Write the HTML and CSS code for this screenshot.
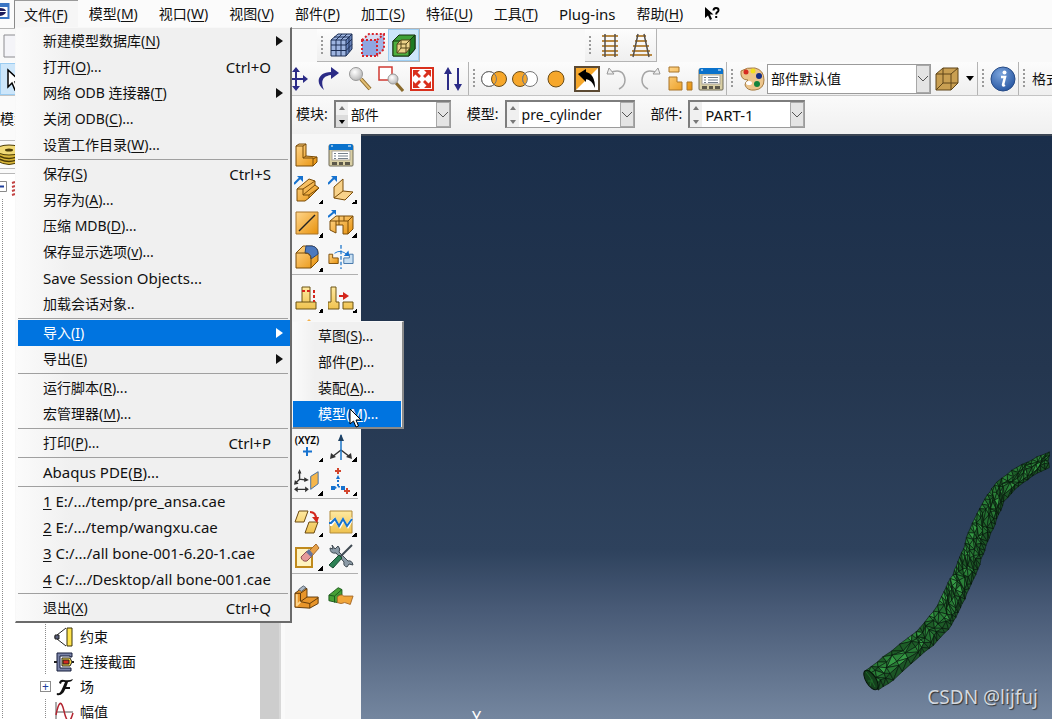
FILE: index.html
```html
<!DOCTYPE html>
<html lang="zh-CN">
<head>
    <meta charset="UTF-8">
    <meta name="viewport" content="width=device-width, initial-scale=1.0">
    <title>Abaqus/CAE</title>
    <link rel="stylesheet" href="styles.css">
</head>
<body>
    <!-- Shared icons -->
    <svg class="defs" width="0" height="0" aria-hidden="true">
        <defs>
            <linearGradient id="gold" x1="0" y1="0" x2="1" y2="1">
                <stop offset="0" stop-color="#ffd68c"/>
                <stop offset="1" stop-color="#e8920c"/>
            </linearGradient>
            <linearGradient id="pale" x1="0" y1="0" x2="0" y2="1">
                <stop offset="0" stop-color="#ffe9a0"/>
                <stop offset="1" stop-color="#efc24e"/>
            </linearGradient>
            <radialGradient id="lens" cx="0.4" cy="0.35" r="0.7">
                <stop offset="0" stop-color="#fff"/>
                <stop offset="1" stop-color="#b4b4b4"/>
            </radialGradient>
            <radialGradient id="info" cx="0.4" cy="0.3" r="0.8">
                <stop offset="0" stop-color="#7ba4dc"/>
                <stop offset="1" stop-color="#1f4f9c"/>
            </radialGradient>
            <symbol id="manager" viewBox="0 0 26 26">
                <rect x="1" y="3" width="24" height="21" rx="1" fill="#d9cfa4" stroke="#6e6a58"/>
                <path d="M1 8V4q0-2 2-2h20q2 0 2 2v4z" fill="#0a72cc"/>
                <path d="M3 4h2M20 4h3" stroke="#fff"/>
                <rect x="4" y="9" width="18" height="9" fill="#fff" stroke="#aaa498"/>
                <path d="M6 11.500h2M6 14h2M6 16.500h2M10 11.500h10M10 14h10M10 16.500h10" stroke="#75808c"/>
                <path d="M4 20h5v3H4zM11 20h4v3h-4zM17 20h5v3h-5z" fill="#5c584a"/>
            </symbol>
        </defs>
    </svg>

    <div class="app">
        <nav class="menubar">
            <svg class="app-icon" width="13" height="28" viewBox="0 0 13 28"><rect x="-6" y="4" width="14.500" height="14" fill="#fff" stroke="#3a75c4" stroke-width="2"/><path d="M0 4h9v3H0z" fill="#3a75c4"/><path d="M0 8q5 0 6 3H0zM0 12h6q-1 3-6 4z" fill="#1d1d5c"/></svg>
            <button class="menu-btn open">文件(<u>F</u>)</button>
            <button class="menu-btn">模型(<u>M</u>)</button>
            <button class="menu-btn">视口(<u>W</u>)</button>
            <button class="menu-btn">视图(<u>V</u>)</button>
            <button class="menu-btn">部件(<u>P</u>)</button>
            <button class="menu-btn">加工(<u>S</u>)</button>
            <button class="menu-btn">特征(<u>U</u>)</button>
            <button class="menu-btn">工具(<u>T</u>)</button>
            <button class="menu-btn latin">Plug-ins</button>
            <button class="menu-btn">帮助(<u>H</u>)</button>
            <button class="menu-btn" aria-label="Context help">
                <svg width="16" height="16" viewBox="0 0 16 16"><path d="M1 1v11l3-2.500 2 4.500 2-1-2-4.500h3.500z"/><path d="M9.500 4.500q0-2.500 2.500-2.500t2.500 2.200q0 1.400-1.500 2.200-.8.600-.8 2M12.200 10v2" fill="none" stroke="#000" stroke-width="2"/></svg>
            </button>
        </nav>

        <div class="toolbar">
            <div class="tools lead">
                <button class="tool" aria-label="New"><svg viewBox="0 0 26 26"><path d="M1 2h14l7 6v16H1z" fill="#f4f4f8" stroke="#8c8c90"/></svg></button>
            </div>
            <div class="tools boxed">
                <span class="grip"></span>
                <button class="tool" aria-label="Mesh"><svg viewBox="0 0 26 26"><path d="M2 8l7-6h14v15l-6 7H2z" fill="#9db4e0"/><path d="M17 8l6-6v15l-6 7z" fill="#6480b8"/><path d="M2 8h15v16H2zM2 8l7-6h14v15l-6 7M17 8l6-6M7 8v16M12 8v16M2 13h15l6-6M2 18.500h15l6-6M7 8l6-6M12 8l6-6M5 5h15v15" fill="none" stroke="#1d2f55"/></svg></button>
                <button class="tool" aria-label="Seeds"><svg viewBox="0 0 26 26"><path d="M2 8l7-6h15v15l-7 7H2z" fill="#d5dbf2"/><path d="M2 8h15v16H2z" fill="#8fa6e0"/><path d="M17 8l7-6v15l-7 7z" fill="#a4b4e4"/><path d="M2 8h15v16H2zM2 8l7-6h15v15l-7 7M17 8l7-6" fill="none" stroke="#d8232b" stroke-width="2" stroke-dasharray="2 2"/></svg></button>
                <button class="tool pressed" aria-label="Geometry"><svg viewBox="0 0 26 26"><path d="M2 9l6-6h16v14l-6 7H2z" fill="#3da037" stroke="#14330f"/><path d="M18 9l6-6v14l-6 7z" fill="#1e7a22" stroke="#14330f"/><path d="M2 9h16v15H2z" fill="#4caf3e" stroke="#14330f"/><path d="M6 12l4-4h9v8l-4 5H6z" fill="#ecd28a" stroke="#54461b"/><path d="M6 12h9v9M15 12l4-4M10 8v8h9M10 16l-4 5" fill="none" stroke="#54461b"/></svg></button>
            </div>
            <div class="tools boxed far">
                <span class="grip"></span>
                <button class="tool" aria-label="Parallel"><svg viewBox="0 0 26 26"><path d="M5 4h16M5 9h16M5 14h16M5 19h16M5 23h16" stroke="#b98a45" stroke-width="2"/><path d="M8 2v23M18 2v23" stroke="#55504a" stroke-width="1.500"/></svg></button>
                <button class="tool" aria-label="Perspective"><svg viewBox="0 0 26 26"><path d="M8 4h10M7 9h12M5 14h16M4 19h18M2 23h22" stroke="#b98a45" stroke-width="2"/><path d="M10 2L5 25M16 2l5 23" stroke="#55504a" stroke-width="1.500"/></svg></button>
            </div>
        </div>

        <div class="toolbar second">
            <div class="tools lead">
                <button class="tool pressed" aria-label="Select"><svg viewBox="0 0 26 26"><path d="M5 4v17l4-4 3 7 3-1-3-7h6z" fill="#fff" stroke="#000" stroke-width="1.500"/></svg></button>
            </div>
            <div class="tools ruled">
                <button class="tool" aria-label="Pan"><svg viewBox="0 0 26 26"><path d="M11 3v20M1 13h20" stroke="#2b2b86" stroke-width="2"/><path d="M11 1l4 5H7zM11 25l4-5H7zM-1 13l5-4v8zM23 13l-5-4v8z" fill="#2b2b86"/></svg></button>
                <button class="tool" aria-label="Rotate"><svg viewBox="0 0 26 26"><path d="M8 24C-2 16 3 6 15 6V1l8 6-8 6V9C7 10 4 15 8 24z" fill="#2b2b86"/></svg></button>
                <button class="tool" aria-label="Zoom"><svg viewBox="0 0 26 26"><path d="M14 13l9 10" stroke="#8a6a2c" stroke-width="4"/><path d="M14 13l9 10" stroke="#e2bd72" stroke-width="2"/><circle cx="9" cy="8" r="6.500" fill="url(#lens)" stroke="#999"/></svg></button>
                <button class="tool" aria-label="Zoom box"><svg viewBox="0 0 26 26"><path d="M1 1h13v13H1z" fill="#fff" stroke="#cf3a32" stroke-width="1.500"/><path d="M18 17l7 8" stroke="#8a6a2c" stroke-width="3"/><circle cx="15" cy="13" r="5" fill="url(#lens)" stroke="#999"/></svg></button>
                <button class="tool" aria-label="Fit view"><svg viewBox="0 0 26 26"><path d="M2 2h22v22H2z" fill="#fff" stroke="#d9301d" stroke-width="2"/><path d="M4 4h7L8.500 6.500 12 10l-2 2-3.500-3.500L4 11zM22 4h-7l2.500 2.500L14 10l2 2 3.500-3.500L22 11zM4 22h7l-2.500-2.500L12 16l-2-2-3.500 3.500L4 15zM22 22h-7l2.500-2.500L14 16l2-2 3.500 3.500L22 15z" fill="#d9301d"/></svg></button>
                <button class="tool" aria-label="Cycle views"><svg viewBox="0 0 26 26"><path d="M8 7v17M18 2v17" stroke="#2b2b86" stroke-width="2"/><path d="M8 1l4 7H4zM18 25l4-7h-8z" fill="#2b2b86"/></svg></button>
            </div>
            <div class="tools ruled">
                <span class="grip"></span>
                <button class="tool" aria-label="Intersect"><svg viewBox="0 0 26 26"><circle cx="8" cy="13" r="7.500" fill="#fff" stroke="#777"/><circle cx="18" cy="13" r="7.500" fill="#f6a72b" stroke="#6b4d1a"/><circle cx="8" cy="13" r="7.500" fill="none" stroke="#777"/></svg></button>
                <button class="tool" aria-label="Remove"><svg viewBox="0 0 26 26"><circle cx="8" cy="13" r="7.500" fill="#f6a72b" stroke="#6b4d1a"/><circle cx="18" cy="13" r="7.500" fill="#fff" stroke="#777"/><path d="M13 7.500a7.500 7.500 0 0 1 0 11 7.500 7.500 0 0 1 0-11z" fill="#f6a72b" stroke="#777"/></svg></button>
                <button class="tool" aria-label="Either"><svg viewBox="0 0 26 26"><circle cx="13" cy="13" r="8" fill="#f6a72b" stroke="#6b4d1a"/></svg></button>
                <button class="tool" aria-label="Replace selection"><svg viewBox="0 0 26 26"><path d="M1 1h24v24H1z" fill="#fff"/><path d="M1 1h24L1 25z" fill="#f6a72b"/><path d="M1 1h24v24H1z" fill="none" stroke="#5c4a33" stroke-width="2"/><path d="M4 8l8-5v3q9 2 9 16-3-8-9-9v3z" fill="#000"/></svg></button>
                <button class="tool" aria-label="Undo"><svg viewBox="0 0 26 26"><path d="M4 7q15-6 16 7 0 6-6 9" fill="none" stroke="#a5a5a5" stroke-width="1.500"/><path d="M2 8l7 0-5-6z" fill="#eee" stroke="#999"/></svg></button>
                <button class="tool" aria-label="Redo"><svg viewBox="0 0 26 26"><path d="M22 7Q7 1 6 14q0 6 6 9" fill="none" stroke="#a5a5a5" stroke-width="1.500"/><path d="M24 8l-7 0 5-6z" fill="#eee" stroke="#999"/></svg></button>
                <button class="tool" aria-label="Display group"><svg viewBox="0 0 26 26"><path d="M2 1h10v5H2zM2 11h8v5h5v8H2zM20 16h5v8h-5z" fill="url(#gold)" stroke="#a8752a"/></svg></button>
                <button class="tool" aria-label="Display group manager"><svg><use href="#manager"/></svg></button>
            </div>
            <div class="tools ruled">
                <span class="grip"></span>
                <button class="tool" aria-label="Color code"><svg viewBox="0 0 26 26"><path d="M2 5Q8 1 16 2q9 2 9 12 0 9-9 10-8 1-10-5 0-3 3-5-8 0-7-9z" fill="#ecc58c" stroke="#a67c42"/><circle cx="7" cy="6" r="2.500" fill="#d62b21"/><circle cx="14" cy="5" r="2.500" fill="#f2e01c"/><circle cx="20" cy="10" r="3" fill="#122c86"/><circle cx="18" cy="18" r="3" fill="#13843c"/><ellipse cx="10" cy="17" rx="3" ry="2" fill="#fff"/></svg></button>
                <div class="combo flat wide">
                    <select aria-label="Color mapping"><option>部件默认值</option></select>
                    <span class="drop"><svg width="12" height="7" viewBox="0 0 12 7"><path d="M1 1l5 5 5-5"/></svg></span>
                </div>
                <button class="tool" aria-label="Render style"><svg viewBox="0 0 26 26"><path d="M2 8l7-6h15v15l-7 7H2z" fill="#c99f52"/><path d="M2 8h15v16H2zM2 8l7-6h15v15l-7 7M17 8l7-6M9 2v15h15M9 17l-7 7" fill="none" stroke="#5e4519"/></svg></button>
                <button class="caret" aria-label="Render style options"><svg width="8" height="5" viewBox="0 0 8 5"><path d="M0 0h8L4 5z"/></svg></button>
            </div>
            <div class="tools ruled">
                <span class="grip"></span>
                <button class="tool" aria-label="Query information"><svg viewBox="0 0 26 26"><circle cx="13" cy="13" r="12" fill="url(#info)" stroke="#274b86"/><circle cx="14.500" cy="6.500" r="2" fill="#fff"/><path d="M11 11h4l-2 8q0 1 2 0" fill="none" stroke="#fff" stroke-width="2.500"/></svg></button>
            </div>
            <div class="tools last">
                <span class="grip"></span>
                <span class="tool-label">格式</span>
            </div>
        </div>

        <main class="workspace">
            <aside class="model-pane">
                <div class="pane-tab">模型</div>
                <div class="pane-tools">
                    <svg width="24" height="22" viewBox="0 0 24 22"><path d="M-4 6v10q13 9 26 0V6z" fill="#d9b63a" stroke="#4b3b05"/><ellipse cx="9" cy="6" rx="13" ry="5" fill="#f0d976" stroke="#4b3b05"/><path d="M-4 10q13 9 26 0M-4 13q13 9 26 0" fill="none" stroke="#4b3b05" stroke-width="1.500"/><ellipse cx="9" cy="6" rx="4" ry="1.500" fill="#4b3b05"/></svg>
                </div>
                <div class="tree-wrap">
                    <div class="tree">
                        <div class="tree-root">
                            <svg width="22" height="25" viewBox="0 0 22 25"><path d="M-4.500 7.500h11v10h-11z" fill="#fff" stroke="#8a8a8a"/><path d="M0 12.500h4" stroke="#1f3f9c" stroke-width="2"/><path d="M12 9l3-1M12 13l3-1M12 17l3-1M12 21l3-1" stroke="#c24343" stroke-width="2"/></svg>
                        </div>
                        <ul class="branch">
                            <li><svg width="20" height="20" viewBox="0 0 20 20"><path d="M13 1h5v18h-5z" fill="#ffe34d" stroke="#3a3208"/><path d="M12 1L3 8M3 12l9 7" fill="none" stroke="#222"/><path d="M0 10h5" stroke="#222"/><path d="M1 8h4v4H1z" fill="#5a5f7c" stroke="#222"/></svg>约束</li>
                            <li><svg width="20" height="20" viewBox="0 0 20 20"><path d="M3 1h15v4h-2V4H6v12h11v3H3z" fill="#7a83a8" stroke="#151d3b"/><path d="M8 6h8l2 4-2 4H8z" fill="#ffde4a" stroke="#222"/><path d="M9 8h6v4H9z" fill="#d32a20" stroke="#222"/><path d="M0 10h3M18 10h2" stroke="#222" stroke-width="2"/></svg>连接截面</li>
                            <li class="has-children"><button class="expand" aria-label="Expand">+</button><svg width="20" height="20" viewBox="0 0 20 20"><path d="M4 6Q5 2 9 3q5 1 9-1-1 3-5 3-3 9-5 11-3 3-6 2-1-2 1-2 1 1 3-2 2-4 4-9-4-1-4 2zM8 10h7v2H7z" fill="#111"/></svg>场</li>
                            <li><svg width="20" height="20" viewBox="0 0 20 20"><path d="M2 0v20M2 10h17" stroke="#555"/><path d="M2 13Q6-8 10 9t8 5l1-3" fill="none" stroke="#b32430" stroke-width="1.500"/></svg>幅值</li>
                        </ul>
                    </div>
                    <div class="scrollbar"></div>
                </div>
            </aside>

            <section class="module">
                <div class="context">
                    <div class="field">
                        <label for="module">模块:</label>
                        <div class="combo">
                            <span class="spin on"><svg width="12" height="22" viewBox="0 0 12 22"><path class="off" d="M3 6l3-4 3 4z"/><path d="M3 16h6l-3 4z"/></svg></span>
                            <select id="module"><option>部件</option></select>
                            <span class="drop"><svg width="12" height="7" viewBox="0 0 12 7"><path d="M1 1l5 5 5-5"/></svg></span>
                        </div>
                    </div>
                    <div class="field">
                        <label for="model">模型:</label>
                        <div class="combo long">
                            <span class="spin"><svg width="12" height="22" viewBox="0 0 12 22"><path class="off" d="M3 6l3-4 3 4z"/><path class="off" d="M3 16h6l-3 4z"/></svg></span>
                            <select id="model"><option>pre_cylinder</option></select>
                            <span class="drop"><svg width="12" height="7" viewBox="0 0 12 7"><path d="M1 1l5 5 5-5"/></svg></span>
                        </div>
                    </div>
                    <div class="field">
                        <label for="part">部件:</label>
                        <div class="combo">
                            <span class="spin"><svg width="12" height="22" viewBox="0 0 12 22"><path class="off" d="M3 6l3-4 3 4z"/><path class="off" d="M3 16h6l-3 4z"/></svg></span>
                            <select id="part" class="latin"><option>PART-1</option></select>
                            <span class="drop"><svg width="12" height="7" viewBox="0 0 12 7"><path d="M1 1l5 5 5-5"/></svg></span>
                        </div>
                    </div>
                </div>

                <div class="stage">
                    <div class="toolbox">
                        <div class="tool-grid">
                            <button class="tool" aria-label="Create part"><svg viewBox="0 0 26 26"><path d="M2 4l3-2h7v12l11 1v5l-4 4H2z" fill="url(#gold)" stroke="#7a4c08"/><path d="M2 4h7v12h10v8M9 4l3-2M9 16l3-2M19 17l4-2" fill="none" stroke="#7a4c08"/></svg></button>
                            <button class="tool" aria-label="Part manager"><svg><use href="#manager"/></svg></button>
                            <button class="tool more" aria-label="Solid extrude"><svg viewBox="0 0 26 26"><path d="M3 13l12-10 6 2v4l4 3-10 10-4 3H3z" fill="url(#gold)" stroke="#7a4c08"/><path d="M3 13h6v6h6v3M9 13L21 5M9 19l12-10M15 19l10-7" fill="none" stroke="#7a4c08"/><path d="M0 8l6-6" stroke="#1672cf" stroke-width="2"/><path d="M3 0h6v6z" fill="#1672cf"/></svg></button>
                            <button class="tool more" aria-label="Shell extrude"><svg viewBox="0 0 26 26"><path d="M6 11l9-8v12l10 1-8 8-11-2z" fill="#f8d28a" stroke="#7a4c08"/><path d="M6 22l9-7" stroke="#7a4c08"/><path d="M0 8l6-6" stroke="#1672cf" stroke-width="2"/><path d="M3 0h6v6z" fill="#1672cf"/></svg></button>
                            <button class="tool more" aria-label="Wire"><svg viewBox="0 0 26 26"><path d="M2 2h22v22H2z" fill="url(#gold)" stroke="#a8752a"/><path d="M5 21L21 5" stroke="#222" stroke-width="1.500"/></svg></button>
                            <button class="tool more" aria-label="Cut extrude"><svg viewBox="0 0 26 26"><path d="M2 11l6-5h17v13l-5 5h-5v-9H8v8l-6-3z" fill="url(#gold)" stroke="#7a4c08"/><path d="M2 11h18v13M20 11l5-5M8 15v-4M11 6v9M16 6v5" fill="none" stroke="#7a4c08"/><path d="M0 7l6-5" stroke="#1672cf" stroke-width="2"/><path d="M3 0h5v5z" fill="#1672cf"/></svg></button>
                            <button class="tool more" aria-label="Round"><svg viewBox="0 0 26 26"><path d="M2 9l7-7h9q6 1 6 7v8l-7 7H2z" fill="url(#gold)" stroke="#7a4c08"/><path d="M12 2h6q6 1 6 8l-7 5q0-6-6-6z" fill="#4c79be" stroke="#26467c"/><path d="M2 9h9q6 0 6 6v9" fill="none" stroke="#7a4c08"/></svg></button>
                            <button class="tool" aria-label="Mirror"><svg viewBox="0 0 28 26"><path d="M1 10h4v4h6v6H1z" fill="url(#gold)" stroke="#7a4c08"/><path d="M27 10h-4v4h-6v6h10z" fill="#c8dff2" stroke="#3f73a8"/><path d="M14 0v26" stroke="#2f80cf" stroke-width="1.500" stroke-dasharray="4 2"/><path d="M7 9q7-5 14 2" fill="none" stroke="#1672cf"/><path d="M17 12l6 0-1-6z" fill="#1672cf"/></svg></button>
                        </div>
                        <hr>
                        <div class="tool-grid">
                            <button class="tool more" aria-label="Edit feature"><svg viewBox="0 0 26 26"><path d="M8 2h8v15h6v7H2v-7h6z" fill="url(#pale)" stroke="#6b5312"/><path d="M8 17h8" stroke="#6b5312"/><path d="M8 6h8M20 5v12" stroke="#d3261c" stroke-width="2" stroke-dasharray="3 2"/></svg></button>
                            <button class="tool more" aria-label="Regenerate"><svg viewBox="0 0 26 26"><path d="M3 2h5v15h3v7H0v-7h3zM15 17h10v7H15z" fill="url(#pale)" stroke="#6b5312"/><path d="M11 11h5" stroke="#d3261c" stroke-width="2"/><path d="M15 7l6 4-6 4z" fill="#d3261c"/></svg></button>
                            <button class="tool" aria-label="Suppress"><svg viewBox="0 0 26 26"><path d="M15 0l5 5-5 5-5-5z" fill="#f3b04a"/><path d="M3 3h2M7 3h2" stroke="#c8962e" stroke-width="2"/></svg></button>
                        </div>
                        <hr class="gap-rule">
                        <div class="tool-grid">
                            <button class="tool more" aria-label="Datum point"><svg viewBox="0 0 26 26"><text class="xyz" x="13" y="10" text-anchor="middle">(XYZ)</text><path d="M13 13v9M9 17.500h9" stroke="#1672cf" stroke-width="2"/></svg></button>
                            <button class="tool more" aria-label="Datum axis"><svg viewBox="0 0 26 26"><path d="M13 16L4 23M13 16l9 7" stroke="#333" stroke-width="1.500"/><path d="M2 25l1-6 5 4zM24 25l-6-2 5-4z" fill="#333"/><path d="M13 1v25" stroke="#1b76c8" stroke-width="1.500"/><path d="M13 0l3 7h-6z" fill="#1f4163"/></svg></button>
                            <button class="tool more" aria-label="Datum plane"><svg viewBox="0 0 28 26"><path d="M18 8l8-5v13l-8 6z" fill="#f6b64a" stroke="#3c6aa0"/><path d="M6 3v8l8 1M6 11l-4 4M2 22h12" fill="none" stroke="#333" stroke-width="1.500"/><path d="M6 0l2 5H4zM16 12l-5 2V9zM0 17l1-5 4 4zM0 22l4-3v6zM16 22l-4-3v6z" fill="#333"/></svg></button>
                            <button class="tool more" aria-label="Datum coordinates"><svg viewBox="0 0 26 26"><path d="M10 0v6M7 3h6M19 20v6M16 23h6" stroke="#d2452c" stroke-width="2"/><path d="M10 12v6l-5 3M10 18l5 3" fill="none" stroke="#1672cf" stroke-width="2" stroke-dasharray="2 2"/><path d="M10 7l2 4H8zM3 18h4v4H3zM13 18h4v4h-4z" fill="#1672cf"/></svg></button>
                        </div>
                        <hr>
                        <div class="tool-grid">
                            <button class="tool more" aria-label="Move"><svg viewBox="0 0 26 26"><path d="M5 2h9l-4 11H1zM15 13h9l-4 11h-9z" fill="url(#pale)" stroke="#6b4a12"/><path d="M16 3q6 0 6 7" fill="none" stroke="#d3261c" stroke-width="2"/><path d="M18 8h7l-2 6z" fill="#d3261c"/></svg></button>
                            <button class="tool more" aria-label="Repair"><svg viewBox="0 0 26 26"><path d="M2 2h22v22H2z" fill="url(#pale)" stroke="#b08a3a"/><path d="M2 11l2 0 3-3 4 7 4-7 4 7 5-7v5l-4 7-4-7-4 7-5-7-3 4H2z" fill="#fff"/><path d="M1 14h2l4-4 4 7 4-7 4 7 5-7" fill="none" stroke="#1672cf" stroke-width="2"/></svg></button>
                            <button class="tool more" aria-label="Edit mesh"><svg viewBox="0 0 26 26"><path d="M2 5h16v19H2z" fill="#fff3c0" stroke="#c08a1c" stroke-width="2"/><path d="M14 9l8-8 3 4-7 8z" fill="#e8a24a" stroke="#a4692a"/><path d="M7 14l6-6 5 5-5 5q-5 1-6-4z" fill="#e59a9a" stroke="#8c5050"/><path d="M12 9l3-3 4 5-2 3z" fill="#64749c"/></svg></button>
                            <button class="tool" aria-label="Tools"><svg viewBox="0 0 26 26"><path d="M4 2l3 4 3-3q3 3 1 6l9 9q4-1 5 4l-4-1-2 3q-4-1-3-5L8 10Q2 11 2 5l3 1z" fill="#8b9aa6" stroke="#3f4a52"/><path d="M24 2L12 14" stroke="#3f4a52" stroke-width="2"/><path d="M11 12l3 3-9 10-4-3z" fill="#2d8154" stroke="#174a30"/></svg></button>
                        </div>
                        <hr>
                        <div class="tool-grid">
                            <button class="tool" aria-label="Assign midsurface"><svg viewBox="0 0 28 26"><path d="M1 9l8-6 5 1v9l12 0v7l-9 5-16-1z" fill="#e8952a" stroke="#5c3608"/><path d="M1 9l6 0v9l10 2v5M7 9l7-5M7 18l7-5M17 20l9-6" fill="none" stroke="#5c3608"/><path d="M3 10v13M7 18l-4 4" stroke="#ffd68c" stroke-width="2"/><path d="M5 5l5-4 3 2-5 4z" fill="#a9b6c4" stroke="#59636e"/></svg></button>
                            <button class="tool" aria-label="Offset faces"><svg viewBox="0 0 28 26"><path d="M1 11l10-8 4 2v6h-4l-1 8-9-2z" fill="#46a035" stroke="#1a571b"/><path d="M1 11l6 1v7M7 12l8-7" fill="none" stroke="#1a571b"/><path d="M10 13q4-4 7-1h10l-3 9-6-2q-4 2-8 0z" fill="#f0a53a" stroke="#a4692a"/></svg></button>
                        </div>
                    </div>
                    <div class="viewport">
                        <svg class="mesh" id="mesh" width="192" height="250" viewBox="860 445 192 250"></svg>
                        <span class="axis">Y</span>
                        <span class="watermark">CSDN @lijfuj</span>
                    </div>
                </div>
            </section>
        </main>
    </div>

    <!-- File menu -->
    <div class="menu file-menu" role="menu">
        <button class="item" role="menuitem"><span>新建模型数据库(<u>N</u>)</span><i class="arrow"></i></button>
        <button class="item" role="menuitem"><span>打开(<u>O</u>)...</span><kbd>Ctrl+O</kbd></button>
        <button class="item" role="menuitem"><span>网络 ODB 连接器(<u>T</u>)</span><i class="arrow"></i></button>
        <button class="item" role="menuitem"><span>关闭 ODB(<u>C</u>)...</span></button>
        <button class="item" role="menuitem"><span>设置工作目录(<u>W</u>)...</span></button>
        <hr>
        <button class="item" role="menuitem"><span>保存(<u>S</u>)</span><kbd>Ctrl+S</kbd></button>
        <button class="item" role="menuitem"><span>另存为(<u>A</u>)...</span></button>
        <button class="item" role="menuitem"><span>压缩 MDB(<u>D</u>)...</span></button>
        <button class="item" role="menuitem"><span>保存显示选项(<u>v</u>)...</span></button>
        <button class="item latin" role="menuitem"><span>Save Session Objects...</span></button>
        <button class="item" role="menuitem"><span>加载会话对象..</span></button>
        <hr>
        <button class="item active" role="menuitem"><span>导入(<u>I</u>)</span><i class="arrow"></i></button>
        <button class="item" role="menuitem"><span>导出(<u>E</u>)</span><i class="arrow"></i></button>
        <hr>
        <button class="item" role="menuitem"><span>运行脚本(<u>R</u>)...</span></button>
        <button class="item" role="menuitem"><span>宏管理器(<u>M</u>)...</span></button>
        <hr>
        <button class="item" role="menuitem"><span>打印(<u>P</u>)...</span><kbd>Ctrl+P</kbd></button>
        <hr>
        <button class="item latin" role="menuitem"><span>Abaqus PDE(<u>B</u>)...</span></button>
        <hr>
        <button class="item latin" role="menuitem"><span><u>1</u> E:/.../temp/pre_ansa.cae</span></button>
        <button class="item latin" role="menuitem"><span><u>2</u> E:/.../temp/wangxu.cae</span></button>
        <button class="item latin" role="menuitem"><span><u>3</u> C:/.../all bone-001-6.20-1.cae</span></button>
        <button class="item latin" role="menuitem"><span><u>4</u> C:/.../Desktop/all bone-001.cae</span></button>
        <hr>
        <button class="item" role="menuitem"><span>退出(<u>X</u>)</span><kbd>Ctrl+Q</kbd></button>
    </div>

    <!-- Import submenu -->
    <div class="menu sub-menu" role="menu">
        <button class="item" role="menuitem"><span>草图(<u>S</u>)...</span></button>
        <button class="item" role="menuitem"><span>部件(<u>P</u>)...</span></button>
        <button class="item" role="menuitem"><span>装配(<u>A</u>)...</span></button>
        <button class="item active" role="menuitem"><span>模型(<u>M</u>)...</span></button>
        <svg class="cursor" width="13" height="20" viewBox="0 0 13 20"><path d="M1 1v15l3.500-3 2.500 6 2.500-1-2.500-6H12z" fill="#fff" stroke="#000"/></svg>
    </div>

    <script src="mesh.js"></script>
</body>
</html>
```
FILE: styles.css
```css
* {
    box-sizing: border-box;
}

body {
    margin: 0;
    height: 100vh;
    overflow: hidden;
    font-family: "Noto Sans", "Noto Sans CJK SC", sans-serif;
    font-size: 14px;
    line-height: 20px;
    color: #111;
    background-color: #fafafa;
}

button, select {
    font: inherit;
    color: inherit;
    border: none;
    padding: 0;
    margin: 0;
    background: none;
}

u {
    text-underline-offset: 2px;
}

.latin {
    font-size: 15px;
}

.defs {
    position: absolute;
}

.app {
    display: flex;
    flex-direction: column;
    height: 100vh;
}

/* Menu bar */
.menubar {
    display: flex;
    gap: 1px;
    height: 28px;
    flex: none;
    background-color: #fbfbfb;
    white-space: nowrap;
}

.app-icon {
    flex: none;
}

.menu-btn {
    padding: 0 10px;
    flex: none;
}

.menu-btn svg {
    display: block;
}

.menu-btn.open {
    padding-left: 9px;
    border-top: 1px solid #9a9a9a;
    border-left: 1px solid #8a8a8a;
    background-color: #f6f6f6;
}

/* Toolbars */
.toolbar {
    display: flex;
    height: 34px;
    flex: none;
    overflow: hidden;
    border-top: 1px solid #b4b4b4;
    background-color: #f9f9f9;
}

.toolbar.second {
    border-top: none;
    border-bottom: 1px solid #c4c4c4;
    background: linear-gradient(#fcfcfc, #efefef);
}

.tools {
    display: flex;
    flex: none;
    align-items: center;
}

.lead {
    width: 282px;
}

.toolbar:not(.second) .lead {
    width: 317px;
}

.boxed {
    border-right: 1px solid #b4b4b4;
    border-bottom: 1px solid #b4b4b4;
    background: linear-gradient(#fdfdfd, #efefef);
}

.far {
    margin-left: 165px;
}

.ruled {
    border-right: 1px solid #b4b4b4;
}

.grip {
    width: 9px;
    height: 19px;
    background: linear-gradient(#9a9a9a 50%, transparent 50%) 4px 0 / 2px 4px repeat-y;
}

.tool {
    display: flex;
    align-items: center;
    justify-content: center;
    width: 31px;
    height: 32px;
    flex: none;
}

.tool svg {
    width: 26px;
    height: 26px;
}

.tool.pressed {
    background-color: #cde6fa;
    border: 1px solid #9ccdf2;
}

.caret {
    width: 15px;
    display: flex;
    justify-content: center;
}

.tool-label {
    width: 34px;
    padding-left: 4px;
}

/* Combo boxes */
.combo {
    display: flex;
    width: 117px;
    height: 28px;
    border: 1px solid #9b9b9b;
    border-top: 2px solid #7d7d7d;
    border-left: 2px solid #7d7d7d;
    background-color: #fff;
}

.combo.long {
    width: 130px;
}

.combo.wide {
    width: 164px;
    height: 30px;
}

.combo.flat {
    border: 1px solid #9b9b9b;
}

.combo select {
    flex: 1;
    min-width: 0;
    padding-left: 3px;
    appearance: none;
}

.spin {
    display: flex;
    align-items: center;
    width: 12px;
    background-color: #f0f0f0;
}

.spin .off {
    fill: #777;
}

.spin.on {
    background: linear-gradient(#f0f0f0 50%, #dcdcdc 50%);
}

.drop {
    display: flex;
    align-items: center;
    justify-content: center;
    width: 14px;
    border: 1px solid #a8a8a8;
    background-color: #e4e4e4;
}

.drop path {
    fill: none;
    stroke: #555;
}

/* Workspace */
.workspace {
    display: flex;
    flex: 1;
    min-height: 0;
}

.model-pane {
    display: flex;
    flex-direction: column;
    width: 285px;
    flex: none;
}

.pane-tab {
    height: 45px;
    padding-top: 13px;
    border-bottom: 1px solid #b8b8b8;
}

.pane-tools {
    height: 28px;
    padding-top: 3px;
    border-bottom: 1px solid #b8b8b8;
}

.pane-tools svg {
    display: block;
}

.tree-wrap {
    display: flex;
    flex: 1;
    min-height: 0;
    margin: 4px 4px 0 0;
    border-top: 1px solid #b8b8b8;
    border-right: 2px solid #d8d8d8;
    background-color: #fff;
}

.tree {
    flex: 1;
    overflow: hidden;
    padding-left: 2px;
}

.tree-root {
    height: 25px;
}

.tree-root svg {
    display: block;
    margin-left: -2px;
}

.branch {
    margin: 0;
    padding: 425px 0 0 42px;
    list-style: none;
    border-left: 1px dotted #8c8c8c;
}

.branch li {
    display: flex;
    align-items: center;
    gap: 6px;
    height: 25px;
    padding-left: 8px;
    border-left: 1px dotted #8c8c8c;
}

.branch li.has-children {
    padding-left: 0;
    margin-left: -5px;
    border-left: none;
    gap: 4px;
}

.branch li.has-children svg {
    margin-right: 1px;
}

.expand {
    width: 11px;
    height: 11px;
    border: 1px solid #8c8c8c;
    background-color: #fff;
    color: #1f3f9c;
    font-size: 12px;
    line-height: 8px;
}

.scrollbar {
    width: 19px;
    background-color: #cdcdcd;
}

.module {
    display: flex;
    flex-direction: column;
    flex: 1;
    min-width: 0;
}

.context {
    display: flex;
    gap: 16px;
    height: 38px;
    flex: none;
    padding: 4px 0 0 11px;
    background: linear-gradient(#fafafa, #f0f0f0);
}

.field {
    display: flex;
    align-items: center;
    gap: 6px;
    height: 28px;
    white-space: nowrap;
}

.stage {
    display: flex;
    flex: 1;
    min-height: 0;
}

.toolbox {
    width: 76px;
    flex: none;
    padding: 4px 3px 0 5px;
    overflow: hidden;
    background-color: #f7f7f7;
}

.tool-grid {
    display: grid;
    grid-template-columns: 34px 34px;
}

.tool-grid .tool {
    width: 34px;
    height: 34px;
}

.tool.more {
    background: linear-gradient(135deg, transparent 50%, #000 50%) 28px 27px / 5px 5px no-repeat;
}

.toolbox hr {
    height: 1px;
    margin: 0 0 6px;
    border: none;
    background-color: #b0b0b0;
}

.toolbox hr.gap-rule {
    margin-bottom: 80px;
}

.xyz {
    font-size: 10px;
    font-weight: 600;
}

/* Viewport */
.viewport {
    position: relative;
    flex: 1;
    overflow: hidden;
    border-top: 2px solid #3c4654;
    background: linear-gradient(#1a2e4a, #24364f 40%, #2e425d 71%, #485a76 81%, #74869f);
}

.mesh {
    position: absolute;
    right: 0;
    bottom: 24px;
}

.axis {
    position: absolute;
    left: 111px;
    bottom: -8px;
    color: #fff;
    font-size: 16px;
}

.watermark {
    position: absolute;
    right: 14px;
    bottom: 12px;
    color: #d4d8de;
    font-size: 19px;
    text-shadow: 1px 1px 1px #333;
}

/* Menus */
.menu {
    position: absolute;
    display: flex;
    flex-direction: column;
    background: linear-gradient(90deg, #fbfbfb, #f0f0f0 20%);
    border: 1px solid #f8f8f8;
    border-right: 2px solid #6b6b6b;
    border-bottom: 2px solid #6b6b6b;
}

.file-menu {
    left: 15px;
    top: 27px;
    width: 277px;
    padding-left: 2px;
    z-index: 1;
}

.sub-menu {
    left: 292px;
    top: 321px;
    width: 112px;
    padding: 1px 1px 0 0;
    border-right-color: #8a8a8a;
    border-bottom-color: #8a8a8a;
    z-index: 2;
}

.menu .item {
    display: flex;
    align-items: center;
    height: 26px;
    padding-left: 25px;
    text-align: left;
    white-space: nowrap;
}

.menu .item span {
    flex: 1;
}

.menu .item.active {
    color: #fff;
    background-color: #0074e0;
}

.menu kbd {
    font: inherit;
    font-size: 15px;
    margin-right: 19px;
}

.menu hr {
    width: 270px;
    height: 1px;
    margin: 1px 0;
    border: none;
    background-color: #a0a0a0;
}

.arrow {
    margin-right: 7px;
    border: 5px solid transparent;
    border-left: 7px solid currentColor;
    border-right: none;
}

.cursor {
    position: absolute;
    left: 56px;
    top: 86px;
}
```
FILE: mesh.js
```js
// Upper and lower outline of the pipe, from the open end to the window edge
const upper = [[865, 671], [883, 657], [908, 638], [920, 628], [938, 605], [946, 587], [955, 570], [962, 553], [968, 533], [977, 513], [987, 495], [997, 482], [1017, 467], [1037, 457], [1054, 450]];
const lower = [[878, 690], [893, 680], [920, 656], [933, 645], [949, 629], [958, 613], [967, 594], [976, 574], [983, 554], [989, 538], [997, 519], [1004, 502], [1018, 486], [1037, 473], [1054, 466]];

let seed = 7;
function rand() {
    seed = (seed * 16807) % 2147483647;
    return seed / 2147483647;
}

function mix(a, b, t) {
    return [a[0] + (b[0] - a[0]) * t, a[1] + (b[1] - a[1]) * t];
}

// Build rings across the pipe, finer away from the open end
const rings = [];
for (let i = 0; i < upper.length - 1; i++) {
    const steps = i < 3 ? 3 : 4;
    for (let s = 0; s < steps; s++) {
        const a = mix(upper[i], upper[i + 1], s / steps);
        const b = mix(lower[i], lower[i + 1], s / steps);
        const ring = [];
        for (let k = 0; k <= 4; k++) {
            const p = mix(a, b, k / 4);
            const jitter = k === 0 || k === 4 ? 1 : 4;
            ring.push([p[0] + (rand() - 0.5) * jitter, p[1] + (rand() - 0.5) * jitter]);
        }
        rings.push(ring);
    }
}

const greens = ['#236e30', '#2b8238', '#359a44', '#287a35', '#1d5c27'];
let shapes = '';
function triangle(a, b, c, edge) {
    const fill = edge ? '#1c5526' : greens[Math.floor(rand() * greens.length)];
    const points = [a, b, c].map(p => p[0].toFixed(1) + ',' + p[1].toFixed(1)).join(' ');
    shapes += `<polygon points="${points}" fill="${fill}" stroke="#06150a" stroke-width="0.6"/>`;
}

for (let i = 0; i < rings.length - 1; i++) {
    for (let k = 0; k < 4; k++) {
        const [a, b, c, d] = [rings[i][k], rings[i + 1][k], rings[i + 1][k + 1], rings[i][k + 1]];
        const edge = k === 3;
        if (rand() > 0.5) {
            triangle(a, b, c, edge);
            triangle(a, c, d, edge);
        } else {
            triangle(a, b, d, edge);
            triangle(b, c, d, edge);
        }
    }
}

// Open end of the pipe
shapes += '<ellipse cx="871" cy="680" rx="5" ry="11" transform="rotate(-32 871 680)" fill="#14401c" stroke="#06150a"/>';
shapes += '<path d="M866 672l4 5 5 10M868 681l5 0M870 686l2-7" fill="none" stroke="#1f6a2b"/>';

document.getElementById('mesh').innerHTML = shapes;
```
